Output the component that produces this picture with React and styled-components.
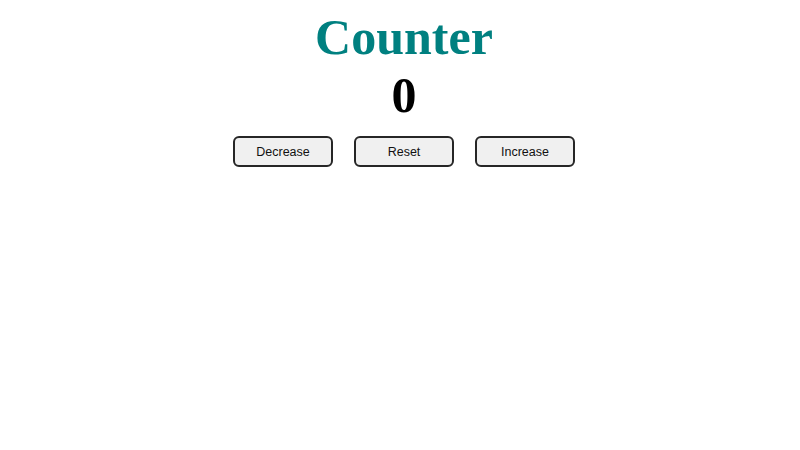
import React, { useState } from "react";
import styled, { createGlobalStyle } from "styled-components";

const GlobalStyle = createGlobalStyle`
  html, body {
    margin: 0;
    padding: 0;
    background: #ffffff;
  }
`;

const Page = styled.div`
  display: flex;
  flex-direction: column;
  align-items: center;
  padding: 8px 0 0 8px;
  font-family: "Liberation Serif", "Times New Roman", serif;
`;

const Title = styled.h1`
  margin: 0;
  font-size: 50px;
  line-height: 58px;
  font-weight: bold;
  color: #008080;
`;

const Count = styled.div`
  margin: 0;
  font-size: 50px;
  line-height: 58px;
  font-weight: bold;
  color: #000000;
`;

const Controls = styled.div`
  display: flex;
  gap: 21px;
  margin-top: 12px;
`;

const Button = styled.button`
  width: 100px;
  height: 31px;
  padding: 0;
  border: 2px solid #262626;
  border-radius: 6px;
  background: #f0f0f0;
  font-family: "Liberation Sans", Arial, sans-serif;
  font-size: 12.5px;
  color: #111111;
  cursor: pointer;
`;

export default function App() {
  const [count, setCount] = useState(0);
  return (
    <>
      <GlobalStyle />
      <Page>
        <Title>Counter</Title>
        <Count>{count}</Count>
        <Controls>
          <Button onClick={() => setCount((c) => c - 1)}>Decrease</Button>
          <Button onClick={() => setCount(0)}>Reset</Button>
          <Button onClick={() => setCount((c) => c + 1)}>Increase</Button>
        </Controls>
      </Page>
    </>
  );
}
